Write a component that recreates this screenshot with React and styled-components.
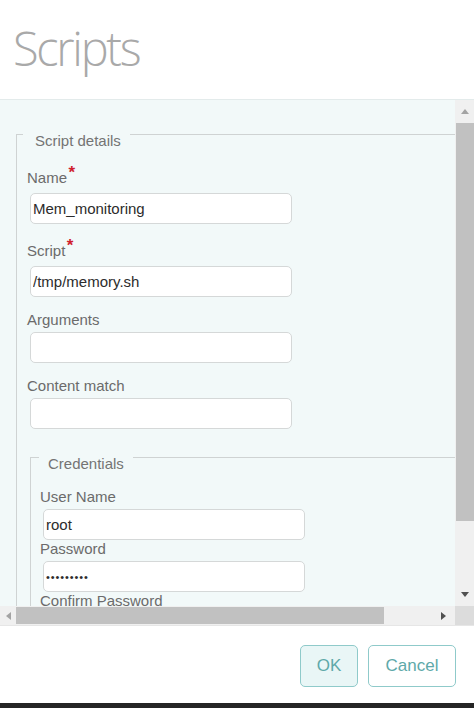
import React from "react";
import styled, { createGlobalStyle } from "styled-components";

const Global = createGlobalStyle`
  *, *::before, *::after { box-sizing: border-box; }
  html, body { margin: 0; padding: 0; background: #fff; }
  body { font-family: "Liberation Sans", Arial, sans-serif; overflow: hidden; }
`;

const Page = styled.div`
  width: 474px;
  height: 708px;
  display: flex;
  flex-direction: column;
  background: #fff;
`;

const Header = styled.header`
  height: 100px;
  flex: none;
  padding: 25px 0 0 13px;
  border-bottom: 1px solid #e3ebeb;
`;

const Title = styled.h1`
  margin: 0;
  font-family: "Open Sans", sans-serif;
  font-weight: 300;
  font-size: 47px;
  line-height: 47px;
  letter-spacing: -2.3px;
  color: #a9a9a9;
`;

const ScrollFrame = styled.div`
  flex: none;
  display: grid;
  grid-template-columns: 455px 19px;
  grid-template-rows: 506px 19px;
  background: #f2f9f9;
`;

const Viewport = styled.div`
  overflow: hidden;
  padding: 19px 0 0 16px;
`;

const Fieldset = styled.fieldset`
  margin: 0;
  padding: ${(p) => p.$pt}px 0 0 ${(p) => p.$pl}px;
  width: ${(p) => p.$w}px;
  min-inline-size: 0;
  border: 1px solid #cfd3d3;
  border-radius: 0;
`;

const Legend = styled.legend`
  margin-left: ${(p) => p.$ml}px;
  padding: 13px 9px 0 ${(p) => p.$pl}px;
  font-size: 15px;
  line-height: 18px;
  color: #747474;
`;

const Field = styled.div`
  display: flex;
  flex-direction: column;
  align-items: flex-start;
  margin-bottom: ${(p) => p.$mb}px;
`;

const Label = styled.label`
  margin-left: -3px;
  margin-bottom: 3px;
  padding: ${(p) => (p.$required ? "4px 0 3px" : "0")};
  font-size: 15px;
  line-height: 18px;
  color: #6b6b6b;
  position: relative;
`;

const Star = styled.span`
  position: absolute;
  top: -1px;
  right: -8px;
  color: #d01f2f;
  font-size: 17px;
  font-weight: bold;
  line-height: 17px;
`;

const Input = styled.input`
  width: 262px;
  height: 31px;
  margin: 0;
  padding: 0 2px;
  border: 1px solid #d5d8d8;
  border-radius: 5px;
  background: #fff;
  font-family: "Liberation Sans", Arial, sans-serif;
  font-size: ${(p) => (p.type === "password" ? "11px" : "15px")};
  letter-spacing: ${(p) => (p.type === "password" ? "0.9px" : "0")};
  color: #2c2c2c;
  outline: none;
`;

const VBar = styled.div`
  display: flex;
  flex-direction: column;
  background: #f0f0f0;
`;

const HBar = styled.div`
  display: flex;
  align-items: stretch;
  background: #f0f0f0;
`;

const Corner = styled.div`
  background: #dcdcdc;
`;

const ArrowBox = styled.div`
  flex: none;
  display: flex;
  align-items: center;
  justify-content: center;
  width: ${(p) => p.$w || "auto"};
  height: ${(p) => p.$h || "auto"};
`;

const VThumb = styled.div`
  flex: none;
  height: 398px;
  margin: 1px 0 0 1px;
  background: #c1c1c1;
`;

const HThumb = styled.div`
  flex: none;
  width: 368px;
  margin: 1px 0 1px 0;
  background: #c1c1c1;
`;

const Spacer = styled.div`
  flex: 1;
`;

const Footer = styled.footer`
  flex: none;
  height: 78px;
  border-top: 1px solid #e6e6e6;
  display: flex;
  justify-content: flex-end;
  align-items: flex-start;
  gap: 10px;
  padding: 19px 18px 0 0;
`;

const Button = styled.button`
  height: 42px;
  width: ${(p) => p.$w}px;
  border: 1px solid #8fcaca;
  border-radius: 5px;
  background: ${(p) => (p.$primary ? "#e9f6f6" : "#fff")};
  color: #5ea9a9;
  font-family: "Liberation Sans", Arial, sans-serif;
  font-size: 17px;
  padding: 0;
`;

const BottomBar = styled.div`
  flex: 1;
  background: #252525;
`;

const Tri = ({ dir, color }) => {
  const pts = {
    up: "0,6 4,1 8,6",
    down: "0,1 8,1 4,6",
    left: "6,0 6,8 1,4",
    right: "1,0 1,8 6,4",
  }[dir];
  const vertical = dir === "up" || dir === "down";
  return (
    <svg width={vertical ? 8 : 7} height={vertical ? 7 : 8} viewBox={vertical ? "0 0 8 7" : "0 0 7 8"}>
      <polygon points={pts} fill={color} />
    </svg>
  );
};

const FormField = ({ label, required, value, type = "text", mb = 14 }) => (
  <Field $mb={mb}>
    <Label $required={required}>
      {label}
      {required && <Star>*</Star>}
    </Label>
    <Input type={type} defaultValue={value} readOnly />
  </Field>
);

export default function App() {
  return (
    <>
      <Global />
      <Page>
        <Header>
          <Title>Scripts</Title>
        </Header>
        <ScrollFrame>
          <Viewport>
            <Fieldset $w={600} $pl={13} $pt={15}>
              <Legend $ml={-7} $pl={12}>Script details</Legend>
              <FormField label="Name" required value="Mem_monitoring" />
              <FormField label="Script" required value="/tmp/memory.sh" />
              <FormField label="Arguments" value="" />
              <FormField label="Content match" value="" mb={13} />
              <Fieldset $w={560} $pl={12} $pt={15}>
                <Legend $ml={-4} $pl={9}>Credentials</Legend>
                <FormField label="User Name" value="root" mb={0} />
                <FormField label="Password" value="password1" type="password" mb={0} />
                <FormField label="Confirm Password" value="password1" type="password" mb={0} />
              </Fieldset>
            </Fieldset>
          </Viewport>
          <VBar>
            <ArrowBox $h="22px">
              <Tri dir="up" color="#a3a3a3" />
            </ArrowBox>
            <VThumb />
            <Spacer />
            <ArrowBox $h="24px">
              <Tri dir="down" color="#505050" />
            </ArrowBox>
          </VBar>
          <HBar>
            <ArrowBox $w="16px">
              <Tri dir="left" color="#a3a3a3" />
            </ArrowBox>
            <HThumb />
            <Spacer />
            <ArrowBox $w="24px">
              <Tri dir="right" color="#505050" />
            </ArrowBox>
          </HBar>
          <Corner />
        </ScrollFrame>
        <Footer>
          <Button $primary $w={58}>OK</Button>
          <Button $w={88}>Cancel</Button>
        </Footer>
        <BottomBar />
      </Page>
    </>
  );
}
